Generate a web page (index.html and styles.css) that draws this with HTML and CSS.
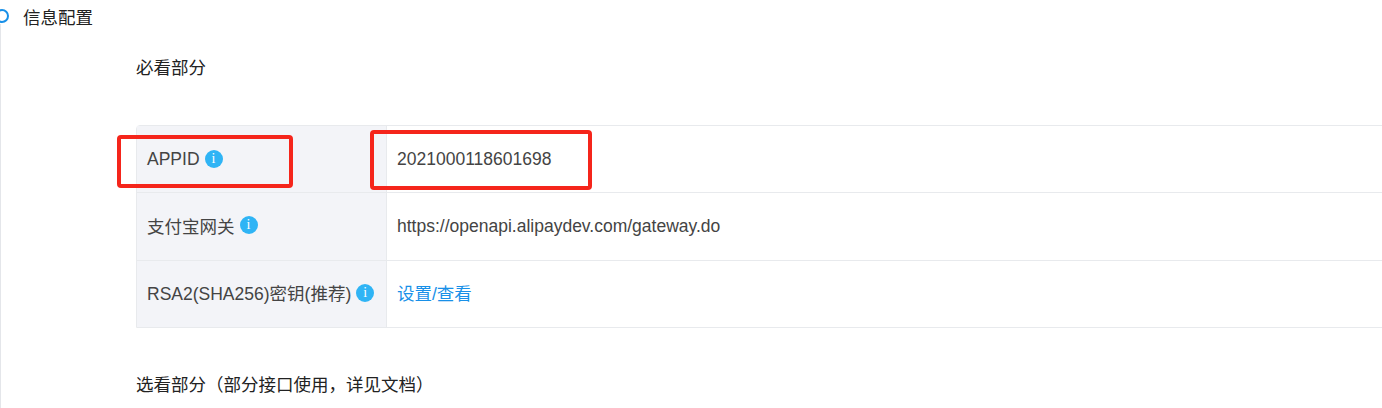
FILE: index.html
```html
<!DOCTYPE html>
<html lang="en">
<head>
  <meta charset="UTF-8">
  <title>信息配置</title>
  <link rel="stylesheet" href="styles.css">
</head>
<body>
<div class="step">
  <span class="step-dot"></span>
  <h2 class="step-title">信息配置</h2>
  <div class="step-body">
    <h3 class="section-title">必看部分</h3>
    <div class="info-table">
      <div class="info-row">
        <div class="info-label">APPID <span class="tip">i</span></div>
        <div class="info-value">2021000118601698</div>
      </div>
      <div class="info-row">
        <div class="info-label raised">支付宝网关 <span class="tip">i</span></div>
        <div class="info-value">https://openapi.alipaydev.com/gateway.do</div>
      </div>
      <div class="info-row">
        <div class="info-label raised">RSA2(SHA256)密钥(推荐) <span class="tip">i</span></div>
        <div class="info-value raised"><a href="#">设置/查看</a></div>
      </div>
    </div>
    <h3 class="section-title section-optional">选看部分（部分接口使用，详见文档）</h3>
  </div>
</div>

<!-- red marks drawn over the screenshot -->
<div class="mark mark-label"></div>
<div class="mark mark-value"></div>
</body>
</html>
```

FILE: styles.css
```css
html, body {
  height: 100%;
}

body {
  margin: 0;
  overflow: hidden;
  background: #fff;
  color: #333;
  font-family: "Liberation Sans", "Noto Sans CJK SC", sans-serif;
  font-size: 17.5px;
}

.step {
  position: relative;
  height: 408px;
  padding-left: 23px;
  box-sizing: border-box;
}

.step::before {
  content: "";
  position: absolute;
  left: 0;
  top: 24px;
  bottom: 0;
  width: 1px;
  background: #e4e6ea;
}

.step-dot {
  position: absolute;
  left: -5px;
  top: 9px;
  width: 10px;
  height: 10px;
  border: 2px solid #1890e8;
  border-radius: 50%;
  background: #fff;
}

.step-title {
  margin: 0;
  padding-top: 7px;
  font-size: 17.5px;
  font-weight: normal;
  line-height: 22px;
  color: #222;
}

.step-body {
  padding-left: 113px;
}

.section-title {
  margin: 0;
  padding-top: 28px;
  font-size: 17.5px;
  font-weight: normal;
  line-height: 22px;
  color: #222;
}

.section-optional {
  padding-top: 46px;
}

.info-table {
  margin-top: 46px;
  margin-right: -40px;
  border: 1px solid #e8eaed;
  border-radius: 4px 0 0 0;
}

.info-row {
  display: flex;
  height: 67px;
  box-sizing: border-box;
  border-bottom: 1px solid #e8eaed;
}

.info-row:nth-child(2) {
  height: 68px;
}

.info-row:last-child {
  height: 66px;
  border-bottom: 0;
}

.info-label {
  display: flex;
  align-items: center;
  gap: 5px;
  box-sizing: border-box;
  width: 250px;
  padding-left: 10px;
  background: #f3f4f8;
  border-right: 1px solid #e8eaed;
  color: #444;
}

.info-value {
  display: flex;
  align-items: center;
  box-sizing: border-box;
  padding-left: 10px;
  color: #444;
}

.raised {
  padding-bottom: 3px;
}

.info-value a {
  color: #1890e8;
  text-decoration: none;
}

.tip {
  display: inline-block;
  width: 18px;
  height: 18px;
  border-radius: 50%;
  background: #2fb4f5;
  color: #fff;
  font-family: "Liberation Serif", serif;
  font-size: 14px;
  line-height: 18px;
  text-align: center;
}

.mark {
  position: absolute;
  box-sizing: border-box;
  border: 4px solid #f5251b;
  border-radius: 4px;
}

.mark-label {
  left: 117px;
  top: 135px;
  width: 176px;
  height: 53px;
}

.mark-value {
  left: 370px;
  top: 130px;
  width: 222px;
  height: 60px;
}
```
